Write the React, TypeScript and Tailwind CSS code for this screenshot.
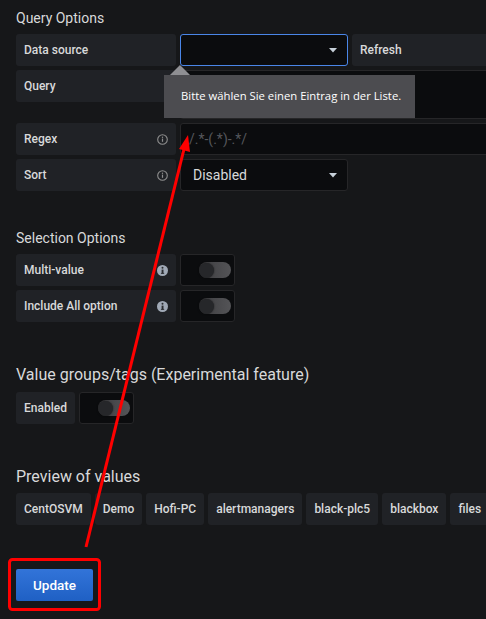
import React from 'react';

const font = { fontFamily: 'Roboto, "Liberation Sans", sans-serif' };

const Caret = () => (
  <svg width="8" height="5" viewBox="0 0 8 5" className="shrink-0">
    <polygon points="0,0 8,0 4,4.5" fill="#c7d0d9" />
  </svg>
);

const InfoOutline = () => (
  <svg width="11" height="11" viewBox="0 0 11 11">
    <circle cx="5.5" cy="5.5" r="4.8" fill="none" stroke="#8e8e8e" strokeWidth="1.1" />
    <rect x="4.9" y="4.6" width="1.2" height="3.2" fill="#8e8e8e" />
    <circle cx="5.5" cy="3.2" r="0.7" fill="#8e8e8e" />
  </svg>
);

const InfoSolid = () => (
  <svg width="11" height="11" viewBox="0 0 11 11">
    <circle cx="5.5" cy="5.5" r="5.5" fill="#a0a9b6" />
    <rect x="4.6" y="4.6" width="1.9" height="4" fill="#2a2c30" />
    <rect x="3.9" y="7.9" width="3.3" height="0.9" fill="#2a2c30" />
    <circle cx="5.5" cy="2.8" r="1" fill="#2a2c30" />
  </svg>
);

interface LabelProps {
  children: React.ReactNode;
  icon?: React.ReactNode;
  className?: string;
}

const Label: React.FC<LabelProps> = ({ children, icon, className = '' }) => (
  <div
    className={`flex h-8 shrink-0 items-center justify-between rounded-[3px] bg-[#202226] px-2 text-[12px] font-medium text-[#d8d9da] ${className}`}
  >
    <span>{children}</span>
    {icon}
  </div>
);

const Switch = () => (
  <div className="flex h-8 w-[55px] shrink-0 items-center rounded-[3px] border border-[#262628] bg-[#0b0c0e] pl-[18px]">
    <div className="flex h-[16px] w-[32px] items-center rounded-full bg-gradient-to-r from-[#3d3d40] to-[#545457]">
      <div className="h-[15px] w-[15px] rounded-full bg-[#26272a] shadow-[0_0_2px_rgba(0,0,0,0.6)]" />
    </div>
  </div>
);

const Heading: React.FC<{ children: React.ReactNode; big?: boolean; className?: string }> = ({
  children,
  big = false,
  className = '',
}) => (
  <div
    className={`${big ? 'h-[22px] text-[16px] leading-[22px]' : 'h-5 text-[14px] leading-5'} text-[#d8d9da] ${className}`}
  >
    {children}
  </div>
);

const previewValues = ['CentOSVM', 'Demo', 'Hofi-PC', 'alertmanagers', 'black-plc5', 'blackbox', 'files'];

export default function App() {
  return (
    <div
      className="relative h-[619px] w-[486px] overflow-hidden bg-[#161719] pl-4"
      style={font}
    >
      {/* Query options */}
      <Heading className="mt-2 mb-[6px]">Query Options</Heading>
      <div className="flex flex-col gap-1">
        <div className="flex gap-1">
          <Label className="w-40">Data source</Label>
          <div className="flex h-8 w-[168px] shrink-0 items-center justify-end rounded-[3px] border border-[#4a86e8] bg-[#0b0c0e] pr-[10px]">
            <Caret />
          </div>
          <Label className="w-[200px]">Refresh</Label>
        </div>
        <div className="flex gap-1">
          <Label className="w-40">Query</Label>
          <div className="h-[49px] w-[400px] shrink-0 rounded-[3px] border border-[#262628] bg-[#0b0c0e]" />
        </div>
        <div className="flex gap-1">
          <Label className="w-40" icon={<InfoOutline />}>
            Regex
          </Label>
          <div className="flex h-8 w-[400px] shrink-0 items-center rounded-[3px] border border-[#262628] bg-[#0b0c0e] px-2 text-[14px] text-[#55575c]">
            /.*-(.*)-.*/
          </div>
        </div>
        <div className="flex gap-1">
          <Label className="w-40" icon={<InfoOutline />}>
            Sort
          </Label>
          <div className="flex h-8 w-[168px] shrink-0 items-center justify-between rounded-[3px] border border-[#262628] bg-[#0b0c0e] pl-3 pr-[10px] text-[14px] text-[#d8d9da]">
            <span>Disabled</span>
            <Caret />
          </div>
        </div>
      </div>

      {/* Selection options */}
      <Heading className="mt-[37px] mb-[6px]">Selection Options</Heading>
      <div className="flex flex-col gap-1">
        <div className="flex gap-1">
          <Label className="w-40" icon={<InfoSolid />}>
            Multi-value
          </Label>
          <Switch />
        </div>
        <div className="flex gap-1">
          <Label className="w-40" icon={<InfoSolid />}>
            Include All option
          </Label>
          <Switch />
        </div>
      </div>

      {/* Value groups */}
      <Heading big className="mt-[42px] mb-[6px]">
        Value groups/tags (Experimental feature)
      </Heading>
      <div className="flex gap-1">
        <Label>Enabled</Label>
        <Switch />
      </div>

      {/* Preview */}
      <Heading big className="mt-[42px] mb-[5px]">
        Preview of values
      </Heading>
      <div className="flex gap-1">
        {previewValues.map((v) => (
          <Label key={v}>{v}</Label>
        ))}
      </div>

      <button className="mt-[44px] h-8 rounded-[2px] bg-gradient-to-b from-[#3274d9] to-[#1f60c4] px-[17px] text-[13.5px] font-medium text-white">
        Update
      </button>

      {/* native validation bubble */}
      <div className="absolute left-[164px] top-[65px]">
        <svg width="40" height="10" viewBox="0 0 40 10" className="block">
          <polygon points="16,0 6,10 26,10" fill="#8f8f93" />
        </svg>
        <div
          className="flex h-[43px] w-[251px] items-center bg-[#4c4c50] pl-[17px] text-[11.3px] text-white"
          style={{ fontFamily: '"Open Sans", "DejaVu Sans", sans-serif' }}
        >
          Bitte wählen Sie einen Eintrag in der Liste.
        </div>
      </div>

      {/* red annotations */}
      <svg
        className="pointer-events-none absolute inset-0"
        width="486"
        height="619"
        viewBox="0 0 486 619"
      >
        <line x1="86" y1="547" x2="185" y2="145" stroke="#ff0000" strokeWidth="3" />
        <polygon points="188,135 190,152 179,149" fill="#ff0000" />
        <rect x="9.5" y="559.5" width="90" height="50" rx="3" fill="none" stroke="#ff0000" strokeWidth="3" />
      </svg>
    </div>
  );
}
